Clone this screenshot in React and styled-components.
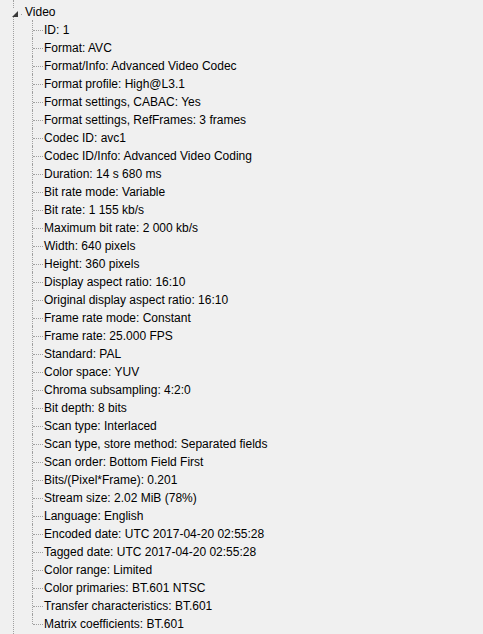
import styled, { createGlobalStyle } from "styled-components";

const items = [
  "ID: 1",
  "Format: AVC",
  "Format/Info: Advanced Video Codec",
  "Format profile: High@L3.1",
  "Format settings, CABAC: Yes",
  "Format settings, RefFrames: 3 frames",
  "Codec ID: avc1",
  "Codec ID/Info: Advanced Video Coding",
  "Duration: 14 s 680 ms",
  "Bit rate mode: Variable",
  "Bit rate: 1 155 kb/s",
  "Maximum bit rate: 2 000 kb/s",
  "Width: 640 pixels",
  "Height: 360 pixels",
  "Display aspect ratio: 16:10",
  "Original display aspect ratio: 16:10",
  "Frame rate mode: Constant",
  "Frame rate: 25.000 FPS",
  "Standard: PAL",
  "Color space: YUV",
  "Chroma subsampling: 4:2:0",
  "Bit depth: 8 bits",
  "Scan type: Interlaced",
  "Scan type, store method: Separated fields",
  "Scan order: Bottom Field First",
  "Bits/(Pixel*Frame): 0.201",
  "Stream size: 2.02 MiB (78%)",
  "Language: English",
  "Encoded date: UTC 2017-04-20 02:55:28",
  "Tagged date: UTC 2017-04-20 02:55:28",
  "Color range: Limited",
  "Color primaries: BT.601 NTSC",
  "Transfer characteristics: BT.601",
  "Matrix coefficients: BT.601",
];

const GlobalStyle = createGlobalStyle`
  html, body {
    margin: 0;
    background: #f0f0f0;
  }
`;

const Page = styled.div`
  height: 634px;
  padding-left: 13px;
  box-sizing: border-box;
  background: #f0f0f0;
  overflow: hidden;
  font: 12px "Liberation Sans", Arial, sans-serif;
  color: #000;
`;

const Trunk = styled.div`
  height: 100%;
  padding-top: 2px;
  box-sizing: border-box;
  border-left: 1px dotted #a0a0a0;
`;

const Header = styled.div`
  display: flex;
  height: 18px;
`;

const Expander = styled.span`
  display: flex;
  align-items: flex-end;
  justify-content: flex-end;
  width: 9px;
  height: 9px;
  margin-left: -5px;
  margin-top: 6px;
  background: #f0f0f0;
`;

const Dot = styled.span`
  width: 1px;
  height: 1px;
  margin: 12px 0 0 3px;
  background: #a0a0a0;
`;

const Label = styled.span`
  padding-left: ${(p) => p.$gap || 1}px;
  line-height: 20px;
  height: 18px;
  white-space: nowrap;
`;

const Group = styled.div`
  margin-left: 18px;
`;

const Row = styled.div`
  display: flex;
  height: 18px;
`;

const Guide = styled.span`
  display: flex;
  flex-direction: column;
  width: 11px;
  height: 18px;
  flex-shrink: 0;
`;

const Stem = styled.span`
  height: ${(p) => p.$h}px;
  border-left: 1px dotted ${(p) => (p.$hidden ? "transparent" : "#a0a0a0")};
`;

const Branch = styled.span`
  height: 0;
  border-top: 1px dotted #a0a0a0;
  margin-left: 1px;
`;

const Triangle = () => (
  <svg width="6" height="6" viewBox="0 0 6 6">
    <polygon points="6,0 6,6 0,6" fill="#3a3a3a" />
  </svg>
);

const Item = ({ text, last }) => (
  <Row>
    <Guide>
      <Stem $h={10} />
      <Branch />
      <Stem $h={7} $hidden={last} />
    </Guide>
    <Label>{text}</Label>
  </Row>
);

const App = () => {
  return (
    <>
      <GlobalStyle />
      <Page>
        <Trunk>
          <Header>
            <Expander>
              <Triangle />
            </Expander>
            <Dot />
            <Label $gap={3}>Video</Label>
          </Header>
          <Group>
            {items.map((t, i) => (
              <Item key={t} text={t} last={i === items.length - 1} />
            ))}
          </Group>
        </Trunk>
      </Page>
    </>
  );
};

export default App;
